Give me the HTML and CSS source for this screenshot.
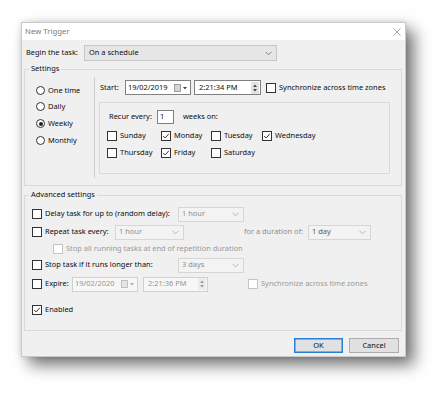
FILE: index.html
```html
<!DOCTYPE html>
<html>
<head>
<meta charset="utf-8">
<link rel="stylesheet" href="styles.css">
</head>
<body>
<div class="dialog">
  <div class="titlebar">
    <span>New Trigger</span>
    <svg class="close" width="8" height="8" viewBox="0 0 8 8"><path d="M0.5 0.5 L7.5 7.5 M7.5 0.5 L0.5 7.5" stroke="#9a9a9a" stroke-width="0.9"/></svg>
  </div>
  <div class="content">
    <div class="begin-row">
      <span class="begin-label">Begin the task:</span>
      <div class="combo main-combo"><span>On a schedule</span><svg class="chev" width="7" height="5" viewBox="0 0 7 5"><polyline points="0.5,0.8 3.5,3.8 6.5,0.8" fill="none" stroke="#777" stroke-width="0.9"/></svg></div>
    </div>

    <div class="group settings">
      <span class="group-title">Settings</span>
      <div class="radios">
        <div class="radio-row"><span class="radio"></span><span>One time</span></div>
        <div class="radio-row"><span class="radio"></span><span>Daily</span></div>
        <div class="radio-row"><span class="radio on"></span><span>Weekly</span></div>
        <div class="radio-row"><span class="radio"></span><span>Monthly</span></div>
      </div>
      <div class="right-col">
        <div class="start-row">
          <span class="start-label">Start:</span>
          <div class="field date-field"><span>19/02/2019</span><svg width="14" height="8" viewBox="0 0 14 8"><rect x="0.5" y="0.5" width="6" height="7" fill="#d6d6d6" stroke="#8a8a8a" stroke-width="0.8"/><polygon points="9,3 13,3 11,5.5" fill="#444"/></svg></div>
          <div class="field time-field"><span>2:21:34 PM</span><span class="spin"><svg width="8" height="12" viewBox="0 0 8 12"><rect x="0" y="0" width="8" height="12" fill="#e4e4e4"/><polygon points="2,5 6,5 4,2.5" fill="#444"/><polygon points="2,7 6,7 4,9.5" fill="#444"/></svg></span></div>
          <span class="cb sync-cb"></span><span class="sync-text">Synchronize across time zones</span>
        </div>
        <div class="recur-box">
          <div class="recur-row">
            <span class="recur-label">Recur every:</span>
            <div class="field num-field">1</div>
            <span class="weeks">weeks on:</span>
          </div>
          <div class="days">
            <div class="day"><span class="cb"></span><span>Sunday</span></div>
            <div class="day"><span class="cb checked"><svg width="8" height="8" viewBox="0 0 8 8"><polyline points="1.2,4 3.2,6 6.8,1.8" fill="none" stroke="#222" stroke-width="0.9"/></svg></span><span>Monday</span></div>
            <div class="day"><span class="cb"></span><span>Tuesday</span></div>
            <div class="day"><span class="cb checked"><svg width="8" height="8" viewBox="0 0 8 8"><polyline points="1.2,4 3.2,6 6.8,1.8" fill="none" stroke="#222" stroke-width="0.9"/></svg></span><span>Wednesday</span></div>
            <div class="day"><span class="cb"></span><span>Thursday</span></div>
            <div class="day"><span class="cb checked"><svg width="8" height="8" viewBox="0 0 8 8"><polyline points="1.2,4 3.2,6 6.8,1.8" fill="none" stroke="#222" stroke-width="0.9"/></svg></span><span>Friday</span></div>
            <div class="day"><span class="cb"></span><span>Saturday</span></div>
          </div>
        </div>
      </div>
    </div>

    <div class="group advanced">
      <span class="group-title">Advanced settings</span>
      <div class="adv-row r1">
        <span class="cb"></span>
        <span class="adv-label w133">Delay task for up to (random delay):</span>
        <div class="combo dis w66"><span>1 hour</span><svg class="chev" width="7" height="5" viewBox="0 0 7 5"><polyline points="0.5,0.8 3.5,3.8 6.5,0.8" fill="none" stroke="#aaa" stroke-width="0.9"/></svg></div>
      </div>
      <div class="adv-row r2">
        <span class="cb"></span>
        <span class="adv-label w70">Repeat task every:</span>
        <div class="combo dis w69"><span>1 hour</span><svg class="chev" width="7" height="5" viewBox="0 0 7 5"><polyline points="0.5,0.8 3.5,3.8 6.5,0.8" fill="none" stroke="#aaa" stroke-width="0.9"/></svg></div>
        <span class="duration">for a duration of:</span>
        <div class="combo dis w63"><span class="dark">1 day</span><svg class="chev" width="7" height="5" viewBox="0 0 7 5"><polyline points="0.5,0.8 3.5,3.8 6.5,0.8" fill="none" stroke="#aaa" stroke-width="0.9"/></svg></div>
      </div>
      <div class="adv-row r3">
        <span class="cb dis-cb"></span>
        <span class="adv-label grey">Stop all running tasks at end of repetition duration</span>
      </div>
      <div class="adv-row r4">
        <span class="cb"></span>
        <span class="adv-label w133">Stop task if it runs longer than:</span>
        <div class="combo dis w66"><span>3 days</span><svg class="chev" width="7" height="5" viewBox="0 0 7 5"><polyline points="0.5,0.8 3.5,3.8 6.5,0.8" fill="none" stroke="#aaa" stroke-width="0.9"/></svg></div>
      </div>
      <div class="adv-row r5">
        <span class="cb"></span>
        <span class="adv-label w27">Expire:</span>
        <div class="field dis-field date-field"><span>19/02/2020</span><svg width="14" height="8" viewBox="0 0 14 8"><rect x="0.5" y="0.5" width="6" height="7" fill="#e6e6e6" stroke="#b5b5b5" stroke-width="0.8"/><polygon points="9,3 13,3 11,5.5" fill="#aaa"/></svg></div>
        <div class="field dis-field time2"><span>2:21:36 PM</span><span class="spin"><svg width="8" height="12" viewBox="0 0 8 12"><rect x="0" y="0" width="8" height="12" fill="#ececec"/><polygon points="2,5 6,5 4,2.5" fill="#999"/><polygon points="2,7 6,7 4,9.5" fill="#999"/></svg></span></div>
        <span class="cb dis-cb sync2"></span>
        <span class="adv-label grey">Synchronize across time zones</span>
      </div>
      <div class="adv-row r6">
        <span class="cb checked"><svg width="8" height="8" viewBox="0 0 8 8"><polyline points="1.2,4 3.2,6 6.8,1.8" fill="none" stroke="#222" stroke-width="0.9"/></svg></span>
        <span class="adv-label">Enabled</span>
      </div>
    </div>

    <div class="buttons">
      <div class="btn ok">OK</div>
      <div class="btn">Cancel</div>
    </div>
  </div>
</div>
</body>
</html>
```
FILE: styles.css
```css
* { box-sizing: border-box; }
html, body { margin: 0; padding: 0; background: #ffffff; }
body {
  width: 448px;
  height: 399px;
  overflow: hidden;
  font-family: "Noto Sans", "Open Sans", sans-serif;
  font-size: 7.45px;
  line-height: 1;
  color: #0e0e0e;
}
.dialog {
  margin: 22px 0 0 21px;
  width: 385px;
  height: 335px;
  border: 1px solid #c9c9c9;
  background: #f0f0f0;
  box-shadow: 8px 8px 15px rgba(0,0,0,0.55), 0 0 6px rgba(0,0,0,0.12);
  display: flex;
  flex-direction: column;
}
.titlebar {
  height: 17px;
  flex: none;
  background: #ffffff;
  display: flex;
  align-items: center;
  justify-content: space-between;
  padding: 0 4px 0 3px;
  color: #7a7a7a;
  font-size: 7.8px;
}
.content { display: flex; flex-direction: column; }

.begin-row {
  margin: 5px 0 0 4px;
  height: 16px;
  display: flex;
  align-items: center;
}
.begin-label { width: 58px; }

.combo {
  height: 15px;
  display: flex;
  align-items: center;
  justify-content: space-between;
  padding: 0 4px 0 3px;
  border: 1px solid #c6c6c6;
  background: #e6e6e6;
}
.main-combo { width: 193px; height: 16px; padding-left: 4px; }
.combo.dis { background: #f3f3f3; border-color: #d6d6d6; color: #8e8e8e; }
.combo .dark { color: #5a5a5a; }
.w66 { width: 66px; }
.w69 { width: 69px; }
.w63 { width: 63px; }

.group {
  position: relative;
  border: 1px solid #dadada;
  margin: 8px 3px 0 2px;
}
.group-title {
  position: absolute;
  top: -5px;
  left: 4px;
  padding: 0 2px;
  background: #f0f0f0;
}
.settings { height: 117px; display: flex; }
.radios { width: 69px; padding: 12px 0 0 11px; }
.radio-row { height: 16.67px; display: flex; align-items: center; }
.radio {
  width: 9px; height: 9px;
  border: 1px solid #333;
  border-radius: 50%;
  background: #fff;
  margin-right: 3px;
  display: flex;
  align-items: center;
  justify-content: center;
}
.radio.on::after {
  content: "";
  width: 4px; height: 4px;
  border-radius: 50%;
  background: #222;
}
.right-col {
  flex: 1;
  margin: 7px 0 7px 0;
  border-left: 1px solid #d0d0d0;
  padding-top: 3px;
}
.start-row {
  height: 15px;
  padding-left: 5px;
  display: flex;
  align-items: center;
}
.start-label { width: 25px; }
.field {
  height: 15px;
  border: 1px solid #808080;
  background: #fff;
  display: flex;
  align-items: center;
  justify-content: space-between;
  padding: 0 2px 0 2px;
}
.date-field { width: 66px; margin-right: 3px; }
.time-field { width: 67px; padding-left: 4px; padding-right: 1px; }
.spin { display: flex; }
.dis-field { border-color: #d0d0d0; background: #f7f7f7; color: #959595; }
.time2 { width: 65px; margin-left: 2px; padding-left: 4px; padding-right: 1px; }
.cb {
  flex: none;
  width: 10px; height: 10px;
  border: 1px solid #333;
  background: #fff;
  display: flex;
  align-items: center;
  justify-content: center;
}
.dis-cb { border-color: #c4c4c4; }
.sync-cb { margin-left: 5px; }
.sync-text { margin-left: 3px; }

.recur-box {
  margin: 7px 0 0 4px;
  width: 291px;
  height: 72px;
  border: 1px solid #dadada;
}
.recur-row {
  margin-top: 7px;
  height: 14px;
  padding-left: 9px;
  display: flex;
  align-items: center;
}
.recur-label { width: 48px; }
.num-field { width: 17px; height: 14px; justify-content: flex-start; padding-left: 2px; }
.weeks { margin-left: 9px; }
.days {
  margin-top: 5px;
  padding-left: 7px;
  display: grid;
  grid-template-columns: 54px 50px 51px auto;
  grid-auto-rows: 14px;
  row-gap: 3px;
}
.day { display: flex; align-items: center; }
.day .cb { margin-right: 3px; }

.advanced { height: 136px; margin-top: 9px; padding-left: 7px; }
.adv-row { height: 16px; display: flex; align-items: center; }
.adv-row > .cb { margin-right: 3px; }
.r1 { margin-top: 10px; }
.r2 { margin-top: 2px; }
.r3 { margin-top: 1px; }
.r3 > .cb { margin-left: 21px; }
.r5 { margin-top: 3px; }
.r6 { margin-top: 10px; }
.w133 { width: 133px; }
.w70 { width: 70px; }
.w27 { width: 27px; }
.grey { color: #9a9a9a; }
.duration { width: 124px; text-align: right; padding-right: 5px; color: #8e8e8e; }
.sync2 { margin-left: 40px; }

.buttons {
  margin-top: 7px;
  padding-right: 6px;
  display: flex;
  justify-content: flex-end;
  gap: 6px;
}
.btn {
  width: 50px;
  height: 15px;
  border: 1px solid #adadad;
  background: #e1e1e1;
  display: flex;
  align-items: center;
  justify-content: center;
}
.btn.ok { width: 49px; border: 1px solid #2a7fd4; box-shadow: inset 0 0 0 0.5px #2a7fd4; }
```
